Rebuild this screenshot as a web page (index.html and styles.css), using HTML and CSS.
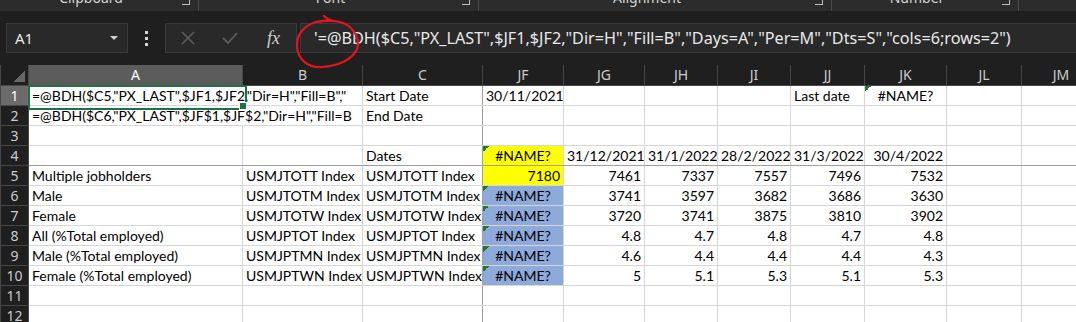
FILE: index.html
```html
<!DOCTYPE html>
<html lang="en">
<head>
  <meta charset="UTF-8" />
  <title>Book1 - Excel</title>
  <link rel="stylesheet" href="styles.css">
</head>
<body>
  <div class="ribbon">
    <div class="group g1"><span class="glabel">Clipboard</span><span class="launch"></span></div>
    <div class="group g2"><span class="glabel">Font</span><span class="launch"></span></div>
    <div class="group g3"><span class="glabel">Alignment</span><span class="launch"></span></div>
    <div class="group g4"><span class="glabel">Number</span><span class="launch"></span></div>
  </div>

  <div class="fbar">
    <div class="namebox">
      <span>A1</span>
      <svg width="10" height="6" viewBox="0 0 10 6"><path d="M1 1 L5 5 L9 1 Z" fill="#d0d0d0"/></svg>
    </div>
    <div class="dots"><i></i><i></i><i></i></div>
    <div class="fbtns">
      <svg width="18" height="18" viewBox="0 0 18 18"><path d="M3 3 L15 15 M15 3 L3 15" stroke="#5c5c5c" stroke-width="1.6"/></svg>
      <svg width="20" height="18" viewBox="0 0 20 18"><path d="M3 9 L8 14 L17 4" stroke="#5c5c5c" stroke-width="1.8" fill="none"/></svg>
      <span class="fx">fx</span>
    </div>
    <div class="finput">'=@BDH($C5,"PX_LAST",$JF1,$JF2,"Dir=H","Fill=B","Days=A","Per=M","Dts=S","cols=6;rows=2")</div>
  </div>

  <div class="grid">
    <table class="sheet">
      <colgroup>
        <col class="w-hdr"><col class="w-a"><col class="w-b"><col class="w-c">
        <col class="w-jf"><col class="w-jg"><col class="w-jh"><col class="w-ji">
        <col class="w-jj"><col class="w-jk"><col class="w-jl"><col class="w-jm">
      </colgroup>
      <tr class="colhdr">
        <th class="corner"></th><th class="sel">A</th><th>B</th><th>C</th><th>JF</th><th>JG</th>
        <th>JH</th><th>JI</th><th>JJ</th><th>JK</th><th>JL</th><th>JM</th>
      </tr>
      <tr>
        <th class="rsel">1</th>
        <td colspan="2" class="active"><div class="clip">=@BDH($C5,"PX_LAST",$JF1,$JF2,"Dir=H","Fill=B","</div></td>
        <td class="fz">Start Date</td><td class="r">30/11/2021</td><td></td><td></td><td></td>
        <td>Last date</td><td class="c err">#NAME?</td><td></td><td></td>
      </tr>
      <tr>
        <th>2</th>
        <td colspan="2"><div class="clip">=@BDH($C6,"PX_LAST",$JF$1,$JF$2,"Dir=H","Fill=B</div></td>
        <td class="fz">End Date</td><td></td><td></td><td></td><td></td><td></td><td></td><td></td><td></td>
      </tr>
      <tr>
        <th>3</th><td></td><td></td><td class="fz"></td><td></td><td></td><td></td><td></td><td></td><td></td><td></td><td></td>
      </tr>
      <tr class="fzrow">
        <th>4</th><td></td><td></td><td class="fz">Dates</td><td class="c yellow err">#NAME?</td>
        <td class="r">31/12/2021</td><td class="r">31/1/2022</td><td class="r">28/2/2022</td><td class="r">31/3/2022</td><td class="r">30/4/2022</td><td></td><td></td>
      </tr>
      <tr>
        <th>5</th><td>Multiple jobholders</td><td>USMJTOTT Index</td><td class="fz">USMJTOTT Index</td><td class="r yellow">7180</td>
        <td class="r">7461</td><td class="r">7337</td><td class="r">7557</td><td class="r">7496</td><td class="r">7532</td><td></td><td></td>
      </tr>
      <tr>
        <th>6</th><td>Male</td><td>USMJTOTM Index</td><td class="fz">USMJTOTM Index</td><td class="c blue err">#NAME?</td>
        <td class="r">3741</td><td class="r">3597</td><td class="r">3682</td><td class="r">3686</td><td class="r">3630</td><td></td><td></td>
      </tr>
      <tr>
        <th>7</th><td>Female</td><td>USMJTOTW Index</td><td class="fz">USMJTOTW Index</td><td class="c blue err">#NAME?</td>
        <td class="r">3720</td><td class="r">3741</td><td class="r">3875</td><td class="r">3810</td><td class="r">3902</td><td></td><td></td>
      </tr>
      <tr>
        <th>8</th><td>All (%Total employed)</td><td>USMJPTOT Index</td><td class="fz">USMJPTOT Index</td><td class="c blue err">#NAME?</td>
        <td class="r">4.8</td><td class="r">4.7</td><td class="r">4.8</td><td class="r">4.7</td><td class="r">4.8</td><td></td><td></td>
      </tr>
      <tr>
        <th>9</th><td>Male (%Total employed)</td><td>USMJPTMN Index</td><td class="fz">USMJPTMN Index</td><td class="c blue err">#NAME?</td>
        <td class="r">4.6</td><td class="r">4.4</td><td class="r">4.4</td><td class="r">4.4</td><td class="r">4.3</td><td></td><td></td>
      </tr>
      <tr>
        <th>10</th><td>Female (%Total employed)</td><td>USMJPTWN Index</td><td class="fz">USMJPTWN Index</td><td class="c blue err">#NAME?</td>
        <td class="r">5</td><td class="r">5.1</td><td class="r">5.3</td><td class="r">5.1</td><td class="r">5.3</td><td></td><td></td>
      </tr>
      <tr>
        <th>11</th><td></td><td></td><td class="fz"></td><td></td><td></td><td></td><td></td><td></td><td></td><td></td><td></td>
      </tr>
      <tr>
        <th>12</th><td></td><td></td><td class="fz"></td><td></td><td></td><td></td><td></td><td></td><td></td><td></td><td></td>
      </tr>
    </table>
  </div>

  <!-- hand-drawn marker around the formula -->
  <svg class="scribble" width="1076" height="322" viewBox="0 0 1076 322">
    <path d="M324 16 C327 19 333 21 333 21 C312 18 296 30 297 46 C298 60 308 68 322 67 C338 66 352 60 357 49 C361 38 352 25 340 22 C332 20 324 21 318 22"
          fill="none" stroke="#e3141b" stroke-width="2.2" stroke-linecap="round"/>
  </svg>
</body>
</html>
```

FILE: styles.css
```css
* { box-sizing: border-box; }
body {
  margin: 0;
  width: 1076px;
  height: 322px;
  overflow: hidden;
  background: #1f1f1f;
  font-family: "Noto Sans", "Open Sans", sans-serif;
}

/* ribbon group labels, cut off at the top */
.ribbon {
  display: flex;
  height: 11px;
  overflow: hidden;
  background: #2c2c2c;
  color: #d4d4d4;
  font-size: 14px;
}
.group {
  display: flex;
  align-items: flex-start;
  border-right: 1px solid #4a4a4a;
  padding-right: 8px;
}
.g1 { width: 199px; }
.g2 { width: 280px; }
.g3 { width: 353px; }
.g4 { width: 187px; }
.glabel {
  flex: 1;
  text-align: center;
  line-height: 16px;
  margin-top: -10px;
}
.launch {
  width: 8px;
  height: 5px;
  border-right: 1px solid #bdbdbd;
  border-bottom: 1px solid #bdbdbd;
}

/* formula bar */
.fbar {
  display: flex;
  align-items: center;
  padding: 12px 0 12px 6px;
}
.namebox, .fbtns, .finput {
  height: 30px;
  background: #292929;
  border: 1px solid #3b3b3b;
  display: flex;
  align-items: center;
}
.namebox {
  width: 122px;
  justify-content: space-between;
  padding: 0 8px 0 8px;
  color: #e6e6e6;
  font-size: 15px;
}
.dots {
  width: 37px;
  display: flex;
  flex-direction: column;
  align-items: center;
  gap: 3px;
}
.dots i {
  width: 3px;
  height: 3px;
  background: #d6d6d6;
}
.fbtns {
  width: 132px;
  gap: 23px;
  padding-left: 13px;
}
.fx {
  margin-left: 4px;
  font-family: "Liberation Serif", serif;
  font-style: italic;
  font-size: 18px;
  color: #d0d0d0;
}
.finput {
  flex: 1;
  margin-left: 3px;
  padding-left: 13px;
  border-right: none;
  color: #e8e8e8;
  font-size: 16.2px;
  white-space: nowrap;
  overflow: hidden;
}

/* worksheet */
.grid {
  overflow: hidden;
}
.sheet {
  table-layout: fixed;
  border-collapse: collapse;
  width: 1100px;
  font-family: Lato, "Liberation Sans", sans-serif;
  font-size: 14px;
}
.w-hdr { width: 28px; }
.w-a { width: 214px; }
.w-b { width: 120px; }
.w-c { width: 120px; }
.w-jf { width: 81px; }
.w-jg { width: 81px; }
.w-jh { width: 73px; }
.w-ji { width: 73px; }
.w-jj { width: 74px; }
.w-jk { width: 82px; }
.w-jl { width: 75px; }
.w-jm { width: 79px; }

.sheet th {
  background: #1f1f1f;
  color: #cbcbcb;
  font-family: "Noto Sans", sans-serif;
  font-weight: normal;
  font-size: 14px;
  height: 20px;
  padding: 0;
  border: 1px solid #474747;
}
.colhdr th { border-top: none; }
.sheet th.corner {
  background: #1f1f1f linear-gradient(135deg, transparent 50%, #666 50%) no-repeat right 3px bottom 3px / 11px 11px;
}
.sheet th.sel { background: #5c5c5c; color: #fff; }
.sheet th.rsel { background: #6b6b6b; color: #fff; }

.sheet td {
  background: #fff;
  color: #000;
  height: 20px;
  padding: 0 3px;
  line-height: 18px;
  vertical-align: bottom;
  white-space: nowrap;
  overflow: hidden;
  border: 1px solid #d6d6d6;
}
.sheet td.r { text-align: right; }
.sheet td.c { text-align: center; }
.sheet td.fz { border-right: 1px solid #9f9f9f; }
.fzrow td { border-bottom: 1px solid #9f9f9f; }
.sheet td.yellow { background-color: #ffff00; }
.sheet td.blue { background-color: #8eaadb; }
.sheet td.err {
  background-image: linear-gradient(135deg, #1c7a2c 50%, transparent 50%);
  background-size: 6px 6px;
  background-repeat: no-repeat;
}

.sheet td.active {
  position: relative;
  overflow: visible;
}
.clip {
  overflow: hidden;
}
.active::after {
  content: "";
  position: absolute;
  left: -1px;
  top: -1px;
  width: 215px;
  height: 21px;
  border: 2px solid #1e7145;
}
.active::before {
  content: "";
  position: absolute;
  left: 210px;
  top: 16px;
  width: 6px;
  height: 6px;
  background: #1e7145;
  border: 1px solid #fff;
  z-index: 1;
}

.scribble {
  position: absolute;
  left: 0;
  top: 0;
  pointer-events: none;
}
```
